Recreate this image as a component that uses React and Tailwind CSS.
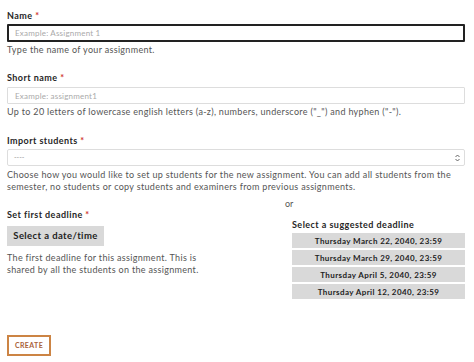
import React, { useState } from 'react';

const Label = ({ children }) => (
    <label className="block text-[9px] leading-[12px] font-bold text-[#262626] tracking-[0.45px]">
        {children} <span className="text-[#d0342c]">*</span>
    </label>
);

const Help = ({ children }) => (
    <p className="text-[9px] leading-[12px] text-[#555] tracking-[0.32px]">{children}</p>
);

export default function App() {
    const [name, setName] = useState('');
    const [shortName, setShortName] = useState('');

    const deadlines = [
        'Thursday March 22, 2040, 23:59',
        'Thursday March 29, 2040, 23:59',
        'Thursday April 5, 2040, 23:59',
        'Thursday April 12, 2040, 23:59',
    ];

    return (
        <div className="w-[474px] h-[362px] bg-white pl-[7px] pr-[9px] pt-[10px] font-['Lato',sans-serif]">
            {/* Name */}
            <Label>Name</Label>
            <input
                type="text"
                value={name}
                onChange={(e) => setName(e.target.value)}
                placeholder="Example: Assignment 1"
                className="mt-[2px] block w-full h-[18px] border-2 border-[#222] rounded-[1px] px-[6px] text-[8px] tracking-[0.2px] placeholder:text-[#aaa] outline-none"
            />
            <div className="mt-[2px]">
                <Help>Type the name of your assignment.</Help>
            </div>

            {/* Short name */}
            <div className="mt-[16px]">
                <Label>Short name</Label>
            </div>
            <input
                type="text"
                value={shortName}
                onChange={(e) => setShortName(e.target.value)}
                placeholder="Example: assignment1"
                className="mt-[3px] block w-full h-[17px] border border-[#ddd] rounded-[1px] px-[7px] text-[8px] tracking-[0.2px] placeholder:text-[#aaa] outline-none"
            />
            <div className="mt-[2px]">
                <Help>Up to 20 letters of lowercase english letters (a-z), numbers, underscore ("_") and hyphen ("-").</Help>
            </div>

            {/* Import students */}
            <div className="mt-[17px]">
                <Label>Import students</Label>
            </div>
            <div className="mt-[2px] relative h-[17px] border border-[#ddd] rounded-[2px] flex items-center px-[6px]">
                <span className="text-[7px] text-[#999]">----</span>
                <svg className="absolute right-[4px] top-[4px]" width="5" height="8" viewBox="0 0 5 8">
                    <path d="M0.5 3 L2.5 1 L4.5 3 M0.5 5 L2.5 7 L4.5 5" fill="none" stroke="#555" strokeWidth="0.9" />
                </svg>
            </div>
            <div className="mt-[3px]">
                <Help>
                    Choose how you would like to set up students for the new assignment. You can add all students from the
                    <br />
                    semester, no students or copy students and examiners from previous assignments.
                </Help>
            </div>

            {/* Deadlines */}
            <div className="flex">
                <div className="w-[215px] mt-[16px]">
                    <Label>Set first deadline</Label>
                    <button className="mt-[2px] w-[97px] h-[20px] bg-[#d9d9d9] text-[9.5px] font-bold text-[#222] tracking-[0.4px]">
                        Select a date/time
                    </button>
                    <div className="mt-[6px]">
                        <Help>
                            The first deadline for this assignment. This is
                            <br />
                            shared by all the students on the assignment.
                        </Help>
                    </div>
                </div>
                <div className="ml-auto w-[173px] mt-[5px]">
                    <p className="-ml-[7px] text-[9px] leading-[12px] text-[#555]">or</p>
                    <p className="mt-[9px] text-[9px] leading-[12px] font-bold text-[#262626] tracking-[0.45px]">
                        Select a suggested deadline
                    </p>
                    <div className="mt-[2px] flex flex-col gap-[2px]">
                        {deadlines.map((d) => (
                            <button
                                key={d}
                                className="h-[15px] w-full bg-[#d9d9d9] text-[8px] font-bold text-[#222] tracking-[0.4px]"
                            >
                                {d}
                            </button>
                        ))}
                    </div>
                </div>
            </div>

            <button className="mt-[36px] w-[44px] h-[21px] border-2 border-[#cc8444] text-[7px] font-bold text-[#a8613a] tracking-[0.4px]">
                CREATE
            </button>
        </div>
    );
}
